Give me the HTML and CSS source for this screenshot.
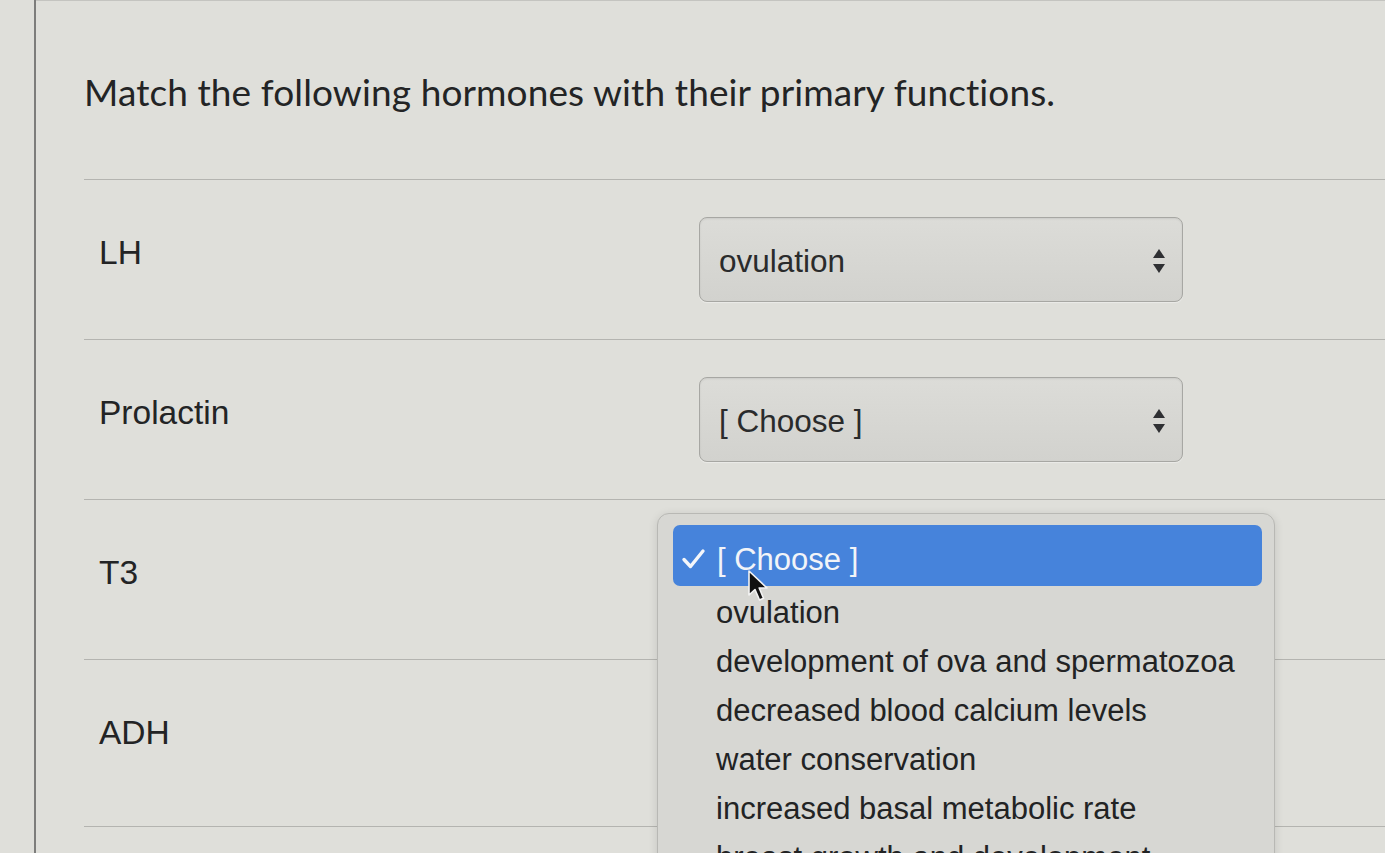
FILE: index.html
```html
<!DOCTYPE html>
<html lang="en">
<head>
<meta charset="utf-8">
<title>Matching question</title>
<link rel="stylesheet" href="styles.css">
</head>
<body>
<div class="page">
  <div class="rail"></div>
  <main class="content">
    <h1 class="title">Match the following hormones with their primary functions.</h1>
    <div class="answers">
      <div class="row">
        <div class="label">LH</div>
        <div class="cell">
          <div class="select">
            <span class="value">ovulation</span>
            <svg class="arrows" width="14" height="26" viewBox="0 0 14 26"><path d="M7 1 L13 10 L1 10 Z" fill="#2f3033"/><path d="M1 16 L13 16 L7 25 Z" fill="#2f3033"/></svg>
          </div>
        </div>
      </div>
      <div class="row">
        <div class="label">Prolactin</div>
        <div class="cell">
          <div class="select">
            <span class="value">[ Choose ]</span>
            <svg class="arrows" width="14" height="26" viewBox="0 0 14 26"><path d="M7 1 L13 10 L1 10 Z" fill="#2f3033"/><path d="M1 16 L13 16 L7 25 Z" fill="#2f3033"/></svg>
          </div>
        </div>
      </div>
      <div class="row">
        <div class="label">T3</div>
        <div class="cell">
          <div class="select">
            <span class="value">[ Choose ]</span>
          </div>
          <div class="menu">
            <div class="item selected"><svg class="check" width="26" height="22" viewBox="0 0 26 22"><path d="M3 11.5 L9.5 18.5 L22 3" fill="none" stroke="#f4f6fa" stroke-width="3.4" stroke-linecap="round" stroke-linejoin="round"/></svg>[ Choose ]</div>
            <div class="item">ovulation</div>
            <div class="item">development of ova and spermatozoa</div>
            <div class="item">decreased blood calcium levels</div>
            <div class="item">water conservation</div>
            <div class="item">increased basal metabolic rate</div>
            <div class="item">breast growth and development</div>
          </div>
          <svg class="cursor" width="24" height="34" viewBox="0 0 24 34"><path d="M2 2 L2 26 L8 20.5 L12.5 31 L16.5 29.3 L12.2 19 L20 19 Z" fill="#111" stroke="#f4f4f4" stroke-width="1.6" stroke-linejoin="round"/></svg>
        </div>
      </div>
      <div class="row last">
        <div class="label">ADH</div>
        <div class="cell"></div>
      </div>
    </div>
  </main>
</div>
</body>
</html>
```

FILE: styles.css
```css
html, body {
  margin: 0;
  padding: 0;
  height: 100%;
  overflow: hidden;
}

body {
  background: #dfdfda;
  color: #232425;
  font-family: "Liberation Sans", Arial, sans-serif;
}

.page {
  display: flex;
  height: 853px;
}

.rail {
  width: 34px;
  flex: none;
  border-right: 2px solid #7d7d7b;
}

.content {
  flex: 1;
  padding-left: 48px;
  border-top: 1px solid #c4c4c0;
  min-width: 0;
}

.title {
  margin: 0;
  padding-top: 66px;
  font-family: Lato, "Liberation Sans", sans-serif;
  font-weight: 400;
  font-size: 37px;
  line-height: 50px;
  color: #232425;
  letter-spacing: 0.1px;
}

.answers {
  margin-top: 62px;
}

.row {
  display: flex;
  align-items: flex-start;
  height: 160px;
  border-top: 1.5px solid #b4b4b0;
  padding-top: 37px;
  box-sizing: border-box;
}

.row.last {
  height: 168px;
  border-bottom: 1.5px solid #b4b4b0;
}

.label {
  width: 600px;
  flex: none;
  padding-left: 15px;
  padding-top: 16px;
  font-size: 33.5px;
  line-height: 40px;
}

.cell {
  position: relative;
  width: 484px;
}

.select {
  height: 85px;
  box-sizing: border-box;
  border: 1.5px solid #a7a7a3;
  border-radius: 8px;
  background: linear-gradient(#dcdcd8, #d2d2ce);
  box-shadow: inset 0 1px 2px rgba(0,0,0,0.08), 0 1px 1px rgba(255,255,255,0.4);
  display: flex;
  align-items: center;
  justify-content: space-between;
  padding: 3px 16px 0 19px;
}

.value {
  font-size: 31.5px;
  color: #2a2b2c;
}

.arrows {
  flex: none;
}

.menu {
  position: absolute;
  left: -42px;
  top: -24px;
  width: 618px;
  height: 400px;
  box-sizing: border-box;
  background: #d7d7d3;
  border: 1.5px solid #b8b8b4;
  border-radius: 12px;
  box-shadow: 0 2px 10px rgba(0,0,0,0.12);
  padding: 11px 12px 0 15px;
  z-index: 2;
}

.item {
  font-size: 31px;
  line-height: 49px;
  padding-left: 43px;
  color: #222324;
  white-space: nowrap;
}

.item.selected {
  display: flex;
  align-items: center;
  background: #4683db;
  color: #f2f4f8;
  border-radius: 7px;
  height: 61px;
  line-height: 40px;
  padding: 8px 0 0 8px;
  box-sizing: border-box;
  margin-bottom: 2px;
}

.check {
  flex: none;
  margin-right: 10px;
  margin-top: -2px;
}

.cursor {
  position: absolute;
  left: 48px;
  top: 32px;
  z-index: 3;
}
```
